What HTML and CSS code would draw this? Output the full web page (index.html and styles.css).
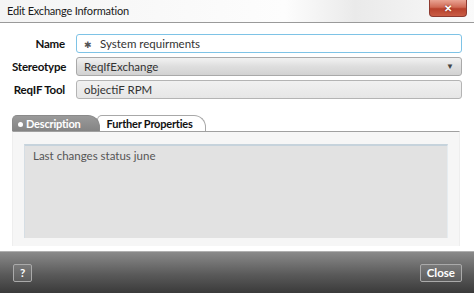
FILE: index.html
```html
<!DOCTYPE html>
<html lang="en">
<head>
    <meta charset="UTF-8">
    <title>Edit Exchange Information</title>
    <link rel="stylesheet" href="styles.css">
</head>
<body>
    <div class="dialog">
        <div class="titlebar">
            <span class="title">Edit Exchange Information</span>
            <button class="closeX">&#x2715;</button>
        </div>

        <div class="content">
            <div class="row">
                <label>Name</label>
                <div class="field nameField"><span class="star">&#x2731;</span>System requirments</div>
            </div>
            <div class="row">
                <label>Stereotype</label>
                <div class="field combo">ReqIfExchange<span class="arrow">&#9660;</span></div>
            </div>
            <div class="row">
                <label>ReqIF Tool</label>
                <div class="field readonly">objectiF RPM</div>
            </div>

            <div class="tabs">
                <div class="tab active"><span class="dot"></span>Description</div>
                <div class="tab">Further Properties</div>
            </div>
            <div class="panel">
                <div class="desc">Last changes status june</div>
            </div>
        </div>

        <div class="footer">
            <button class="btn">?</button>
            <button class="btn">Close</button>
        </div>
    </div>
</body>
</html>
```

FILE: styles.css
```css
body {
    margin: 0;
    width: 474px;
    height: 293px;
    overflow: hidden;
    font-family: 'Lato', 'Liberation Sans', sans-serif;
    font-size: 11.5px;
    color: #222;
    background: #fff;
}

.dialog {
    display: flex;
    flex-direction: column;
    height: 293px;
}

.titlebar {
    height: 22px;
    display: flex;
    align-items: flex-start;
    justify-content: space-between;
    background: linear-gradient(90deg, #f4f4f4, #fdfdfd 60%, #eaeaea 75%, #fafafa);
    border-bottom: 1px solid #9a9a9a;
}

.title {
    padding: 4px 0 0 7px;
    font-size: 11px;
    letter-spacing: -0.2px;
    color: #1a1a1a;
}

.closeX {
    width: 38px;
    height: 17px;
    margin-right: 7px;
    padding: 0;
    border: 1px solid #8e3a30;
    border-top: none;
    border-radius: 0 0 4px 4px;
    background: linear-gradient(#e9a393, #d06a55 45%, #b8412c 55%, #c95c45);
    color: #fff;
    font-size: 10px;
    font-weight: bold;
    text-shadow: 0 0 2px #6d1f12;
}

.content {
    flex: 1;
    padding: 11px 12px 0 12px;
}

.row {
    display: flex;
    align-items: center;
    margin-bottom: 4px;
}

.row label {
    width: 53px;
    margin-right: 11px;
    text-align: right;
    font-weight: bold;
    white-space: nowrap;
    letter-spacing: -0.2px;
    color: #111;
}

.field {
    flex: 1;
    height: 17px;
    line-height: 17px;
    padding-left: 7px;
    border: 1px solid #b4b4b4;
    border-radius: 3px;
    color: #333;
}

.nameField {
    border-color: #7ec3e6;
    background: #fff;
}

.star {
    color: #555;
    font-size: 9px;
    margin-right: 8px;
}

.combo {
    display: flex;
    justify-content: space-between;
    background: linear-gradient(#f2f2f2, #dedede 50%, #d2d2d2);
    border-color: #a9a9a9;
}

.arrow {
    font-size: 8px;
    color: #444;
    margin-right: 7px;
}

.readonly {
    background: linear-gradient(#f1f1f1, #e6e6e6);
}

.tabs {
    display: flex;
    margin-top: 16px;
    height: 16px;
}

.tab {
    font-size: 11px;
    letter-spacing: -0.2px;
    font-weight: bold;
    line-height: 16px;
    border: 1px solid #a8a8a8;
    border-bottom: none;
    border-radius: 5px 12px 0 0;
    background: #fff;
    color: #111;
}

.tab.active {
    background: linear-gradient(#9a9a9a, #848484);
    color: #fff;
    padding: 0 18px 0 5px;
    border-color: #8a8a8a;
    z-index: 1;
}

.tab + .tab {
    margin-left: -3px;
    padding: 0 12px 0 9px;
}

.dot {
    display: inline-block;
    width: 5px;
    height: 5px;
    border-radius: 50%;
    background: #fff;
    margin-right: 3px;
    vertical-align: 1px;
}

.panel {
    height: 96px;
    margin-right: 2px;
    padding: 12px 11px 6px 11px;
    border-top: 1px solid #a0a0a0;
    border-left: 1px solid #eee;
    border-right: 1px solid #eee;
    background: #f6f6f6;
}

.desc {
    height: 86px;
    padding: 3px 8px;
    border-top: 2px solid #c6d3dc;
    border-left: 1px solid #d6dee4;
    border-right: 1px solid #e6ecf0;
    background: #e2e2e2;
    color: #555;
}

.footer {
    height: 41px;
    display: flex;
    align-items: center;
    justify-content: space-between;
    padding: 0 12px 0 13px;
    border-top: 1px solid #b0b0b0;
    background: linear-gradient(#8a8a8a, #5a5a5a 55%, #3a3a3a);
}

.btn {
    height: 18px;
    min-width: 19px;
    padding: 0 6px;
    border: 1px solid #aaa;
    border-radius: 2px;
    background: linear-gradient(#7a7a7a, #5c5c5c);
    color: #fff;
    font-family: 'Lato', 'Liberation Sans', sans-serif;
    font-size: 11.5px;
    font-weight: bold;
}
```
